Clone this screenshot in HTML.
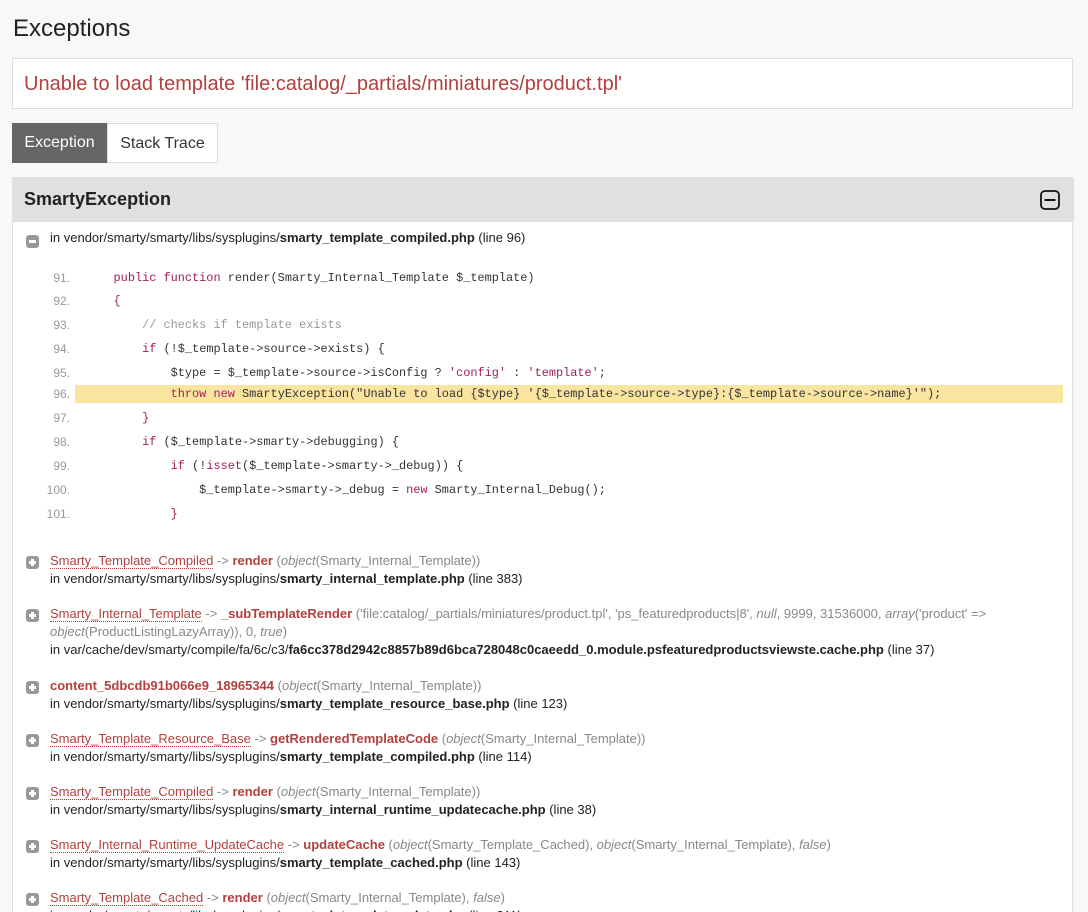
<!DOCTYPE html>
<html><head><meta charset="utf-8"><style>
*{margin:0;padding:0;box-sizing:border-box}
html,body{width:1088px;height:912px;overflow:hidden}
body{background:#f8f8f8;font-family:"Liberation Sans",Arial,sans-serif;color:#222;position:relative}
.abs{position:absolute}
h1{position:absolute;left:13px;top:15px;font-size:24px;font-weight:normal;color:#222}
.msg{left:12px;top:58px;width:1061px;height:51px;background:#fff;border:1px solid #ddd;color:#b0413e;font-size:20px;padding:14px 0 0 11px}
.tab{top:123px;height:40px;font-size:16px;padding-top:11px;text-align:center}
.panel{left:12px;top:177px;width:1061px;height:760px;background:#fff;border:1px solid #e0e0e0}
.hdr{left:0;top:0;width:1061px;height:44px;background:#e0e0e0;font-weight:bold;font-size:18px;padding:11px 0 0 11px;color:#222}
.ico{position:absolute;width:13px;height:13px;background:#999;border-radius:3px}
.ico:before{content:"";position:absolute;left:3px;top:5px;width:7px;height:3px;background:#fff}
.ico.p:after{content:"";position:absolute;left:5px;top:3px;width:3px;height:7px;background:#fff}
.t{position:absolute;left:37px;font-size:13px;line-height:18px;color:#888;white-space:nowrap}
.t .c{color:#b0413e;border-bottom:1px dotted #b0413e}
.t .m{color:#b0413e;font-weight:bold}
.t .d{color:#222}
.t b{color:#222}
.code{position:absolute;left:0;width:1061px;font-family:"Liberation Mono",Consolas,monospace;font-size:11.9px;white-space:pre}
.ln{position:absolute;left:0;width:1061px;height:18px;line-height:18px}
.ln .n{position:absolute;left:0;width:57px;text-align:right;font-family:"Liberation Sans",Arial,sans-serif;font-size:12px;color:#999}
.ln .s{position:absolute;left:72px;color:#333}
.k{color:#a0205c}.cm{color:#999}.str{color:#a0205c}
.hl{background:#f9e4a0;left:62px!important;width:988px!important}
</style></head><body>
<h1>Exceptions</h1>
<div class="abs msg">Unable to load template 'file:catalog/_partials/miniatures/product.tpl'</div>
<div class="abs tab" style="left:12px;width:95px;background:#666;color:#fff">Exception</div>
<div class="abs tab" style="left:107px;width:111px;background:#fff;border:1px solid #ddd;color:#333">Stack Trace</div>
<div class="abs panel">
<div class="abs hdr">SmartyException</div>
<svg class="abs" style="left:1027px;top:12px" width="20" height="20" viewBox="0 0 20 20"><rect x="1" y="1" width="18" height="18" rx="4" fill="none" stroke="#111" stroke-width="1.8"/><line x1="4.5" y1="10" x2="15.5" y2="10" stroke="#111" stroke-width="2"/></svg>
<div class="ico" style="left:13px;top:57px"></div>
<div class="t" style="top:51px;color:#222">in vendor/smarty/smarty/libs/sysplugins/<b>smarty_template_compiled.php</b> (line 96)</div>
<div class="code">
<div class="ln" style="top:91px"><span class="n">91.</span><span class="s">    <span class="k">public function</span> render(Smarty_Internal_Template $_template)</span></div>
<div class="ln" style="top:114px"><span class="n">92.</span><span class="s">    <span class="k">{</span></span></div>
<div class="ln" style="top:138px"><span class="n">93.</span><span class="s">        <span class="cm">// checks if template exists</span></span></div>
<div class="ln" style="top:162px"><span class="n">94.</span><span class="s">        <span class="k">if</span> (!$_template-&gt;source-&gt;exists) {</span></div>
<div class="ln" style="top:186px"><span class="n">95.</span><span class="s">            $type = $_template-&gt;source-&gt;isConfig ? <span class="str">'config'</span> : <span class="str">'template'</span>;</span></div>
<div class="ln hl" style="top:207px"></div>
<div class="ln" style="top:207px"><span class="n">96.</span><span class="s">            <span class="k">throw new</span> SmartyException("Unable to load {$type} '{$_template-&gt;source-&gt;type}:{$_template-&gt;source-&gt;name}'");</span></div>
<div class="ln" style="top:231px"><span class="n">97.</span><span class="s">        <span class="k">}</span></span></div>
<div class="ln" style="top:255px"><span class="n">98.</span><span class="s">        <span class="k">if</span> ($_template-&gt;smarty-&gt;debugging) {</span></div>
<div class="ln" style="top:279px"><span class="n">99.</span><span class="s">            <span class="k">if</span> (!<span class="k">isset</span>($_template-&gt;smarty-&gt;_debug)) {</span></div>
<div class="ln" style="top:303px"><span class="n">100.</span><span class="s">                $_template-&gt;smarty-&gt;_debug = <span class="k">new</span> Smarty_Internal_Debug();</span></div>
<div class="ln" style="top:327px"><span class="n">101.</span><span class="s">            <span class="k">}</span></span></div>
</div>

<div class="ico p" style="left:13px;top:378px"></div>
<div class="t" style="top:374px"><span class="c">Smarty_Template_Compiled</span> -&gt; <span class="m">render</span> (<i>object</i>(Smarty_Internal_Template))<br><span class="d">in vendor/smarty/smarty/libs/sysplugins/<b>smarty_internal_template.php</b> (line 383)</span></div>

<div class="ico p" style="left:13px;top:431px"></div>
<div class="t" style="top:427px"><span class="c">Smarty_Internal_Template</span> -&gt; <span class="m">_subTemplateRender</span> ('file:catalog/_partials/miniatures/product.tpl', 'ps_featuredproducts|8', <i>null</i>, 9999, 31536000, <i>array</i>('product' =&gt;<br><i>object</i>(ProductListingLazyArray)), 0, <i>true</i>)<br><span class="d">in var/cache/dev/smarty/compile/fa/6c/c3/<b>fa6cc378d2942c8857b89d6bca728048c0caeedd_0.module.psfeaturedproductsviewste.cache.php</b> (line 37)</span></div>

<div class="ico p" style="left:13px;top:503px"></div>
<div class="t" style="top:499px"><span class="m">content_5dbcdb91b066e9_18965344</span> (<i>object</i>(Smarty_Internal_Template))<br><span class="d">in vendor/smarty/smarty/libs/sysplugins/<b>smarty_template_resource_base.php</b> (line 123)</span></div>

<div class="ico p" style="left:13px;top:556px"></div>
<div class="t" style="top:552px"><span class="c">Smarty_Template_Resource_Base</span> -&gt; <span class="m">getRenderedTemplateCode</span> (<i>object</i>(Smarty_Internal_Template))<br><span class="d">in vendor/smarty/smarty/libs/sysplugins/<b>smarty_template_compiled.php</b> (line 114)</span></div>

<div class="ico p" style="left:13px;top:609px"></div>
<div class="t" style="top:605px"><span class="c">Smarty_Template_Compiled</span> -&gt; <span class="m">render</span> (<i>object</i>(Smarty_Internal_Template))<br><span class="d">in vendor/smarty/smarty/libs/sysplugins/<b>smarty_internal_runtime_updatecache.php</b> (line 38)</span></div>

<div class="ico p" style="left:13px;top:662px"></div>
<div class="t" style="top:658px"><span class="c">Smarty_Internal_Runtime_UpdateCache</span> -&gt; <span class="m">updateCache</span> (<i>object</i>(Smarty_Template_Cached), <i>object</i>(Smarty_Internal_Template), <i>false</i>)<br><span class="d">in vendor/smarty/smarty/libs/sysplugins/<b>smarty_template_cached.php</b> (line 143)</span></div>

<div class="ico p" style="left:13px;top:715px"></div>
<div class="t" style="top:711px"><span class="c">Smarty_Template_Cached</span> -&gt; <span class="m">render</span> (<i>object</i>(Smarty_Internal_Template), <i>false</i>)<br><span class="d">in vendor/smarty/smarty/libs/sysplugins/<b>smarty_internal_template.php</b> (line 211)</span></div>
</div>
</body></html>
